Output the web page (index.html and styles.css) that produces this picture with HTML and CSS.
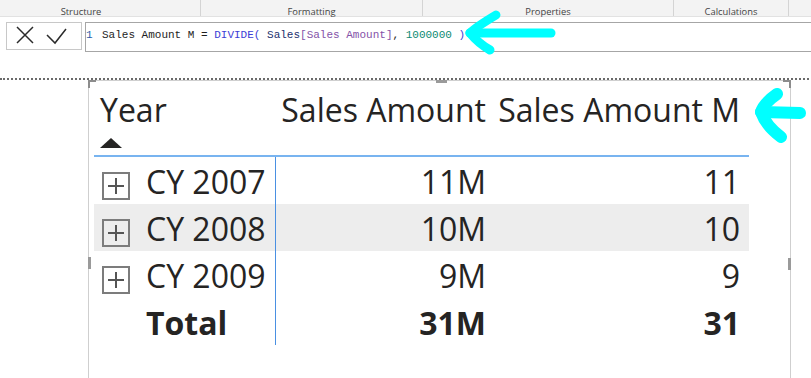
FILE: index.html
```html
<!DOCTYPE html>
<html>
<head>
<meta charset="utf-8">
<link rel="stylesheet" href="styles.css">
</head>
<body>
<div class="ribbon">
  <div class="group g1">Structure</div>
  <div class="group g2">Formatting</div>
  <div class="group g3">Properties</div>
  <div class="group g4">Calculations</div>
  <div class="group g5"></div>
</div>
<div class="fbar">
  <div class="fx">
    <svg class="fx-icons" width="76" height="28" viewBox="0 0 76 28">
      <path d="M11 5 L27 21 M27 5 L11 21" stroke="#2b2b2b" stroke-width="1.5" fill="none"/>
      <path d="M41 13 L49 21 L60 7" stroke="#2b2b2b" stroke-width="1.5" fill="none"/>
    </svg>
  </div>
  <div class="formula"><span class="ln">1</span><span class="tx">Sales Amount M = </span><span class="fn">DIVIDE(</span><span class="tx"> </span><span class="tb">Sales</span><span class="col">[Sales Amount]</span><span class="tx">, </span><span class="num">1000000</span><span class="tx"> </span><span class="fn">)</span></div>
</div>
<div class="dots"></div>
<div class="visual">
  <span class="corner tl"></span>
  <span class="corner tr"></span>
  <span class="handle top"></span>
  <span class="handle left"></span>
  <span class="handle right"></span>
  <div class="tbl">
    <div class="thead">
      <div class="cell c1 hcell">Year<div class="sort"></div></div>
      <div class="cell c2 hcell">Sales Amount</div>
      <div class="cell c3 hcell">Sales Amount M</div>
    </div>
    <div class="row">
      <div class="cell c1 body"><span class="exp"></span>CY 2007</div>
      <div class="cell c2">11M</div>
      <div class="cell c3">11</div>
    </div>
    <div class="row alt">
      <div class="cell c1 body"><span class="exp"></span>CY 2008</div>
      <div class="cell c2">10M</div>
      <div class="cell c3">10</div>
    </div>
    <div class="row">
      <div class="cell c1 body"><span class="exp"></span>CY 2009</div>
      <div class="cell c2">9M</div>
      <div class="cell c3">9</div>
    </div>
    <div class="row total">
      <div class="cell c1 body">Total</div>
      <div class="cell c2">31M</div>
      <div class="cell c3">31</div>
    </div>
  </div>
</div>
<svg class="arrows" width="811" height="378" viewBox="0 0 811 378">
  <g stroke="#00ffff" fill="none" stroke-linecap="round" stroke-linejoin="round">
    <path d="M496 15 Q476 27 470 33 Q478 43 490 50" stroke-width="9"/>
    <path d="M470 33 L551 33" stroke-width="9"/>
    <path d="M777 94 Q764 103 761 112 Q766 126 781 137" stroke-width="12"/>
    <path d="M761 112 L800 113" stroke-width="12"/>
  </g>
</svg>
</body>
</html>
```
FILE: styles.css
```css
* { box-sizing: border-box; margin: 0; padding: 0; }
html, body { width: 811px; height: 378px; overflow: hidden; background: #fff; }
body { position: relative; font-family: "Open Sans", "Noto Sans", sans-serif; color: #252423; }

.ribbon { display: flex; height: 17px; margin-left: -38px; width: 849px; background: #f3f3f3; border-bottom: 1px solid #e2e2e2; }
.group { display: flex; align-items: flex-end; justify-content: center; border-right: 1px solid #d4d4d4; font-size: 9.4px; line-height: 9px; color: #444; }
.g1 { width: 239px; }
.g2 { width: 222px; }
.g3 { width: 251px; }
.g4 { width: 115px; }
.g5 { flex: 1; border-right: none; }

.fbar { display: flex; margin-top: 5px; height: 30px; }
.fx { width: 76px; height: 28px; margin-left: 6px; border: 1px solid #c8c8c8; background: #fff; }
.fx-icons { display: block; margin: -1px; }
.formula { flex: 1; margin-left: 3px; margin-right: -20px; height: 30px; border: 1px solid #a6a6a6; padding-top: 5px; font: 11px/14px "Liberation Mono", monospace; white-space: pre; color: #1e1e1e; }
.ln { display: inline-block; width: 16px; color: #2a5ca8; }
.fn { color: #3d3dd6; }
.tb { color: #1c2f6e; }
.col { color: #8452a8; }
.num { color: #0b8a72; }

.dots { height: 2px; margin-top: 26px; background: repeating-linear-gradient(90deg, #6a6a6a 0 2px, transparent 2px 4px); background-position: 3px 0; }

.visual { position: relative; margin-left: 88px; width: 703px; height: 300px; border: 1px solid #cfcfcf; border-bottom: none; }
.corner { position: absolute; top: -1px; width: 8px; height: 8px; border-top: 2px solid #8c8c8c; }
.corner.tl { left: -1px; border-left: 2px solid #8c8c8c; }
.corner.tr { right: -1px; border-right: 2px solid #8c8c8c; }
.handle { position: absolute; background: #9a9a9a; }
.handle.top { top: -1px; left: 347px; width: 11px; height: 3px; }
.handle.left { left: -1px; top: 176px; width: 3px; height: 12px; }
.handle.right { right: -1px; top: 177px; width: 3px; height: 12px; }

.tbl { margin-left: 5px; width: 655px; }
.thead { display: flex; height: 76px; border-bottom: 2px solid #78b4f0; }
.row { display: flex; height: 47px; }
.row.alt { background: #ededed; }
.cell { font-size: 32px; line-height: 44px; padding-top: 3px; white-space: nowrap; }
.hcell { line-height: 40px; padding-top: 9px; }
.c1 { width: 182px; padding-left: 6px; }
.c2 { width: 217px; text-align: right; padding-right: 7px; }
.c3 { width: 256px; text-align: right; padding-right: 9px; }
.c1.body { display: flex; align-items: flex-start; padding-left: 0; border-right: 1px solid #4a90e2; }
.total .cell { font-weight: 700; }
.total .c1.body { padding-left: 52px; }

.sort { width: 0; height: 0; margin-top: 8px; border-left: 11.5px solid transparent; border-right: 11.5px solid transparent; border-bottom: 10px solid #252423; }

.exp { position: relative; flex: none; width: 28px; height: 28px; margin: 12px 16px 0 8px; border: 2px solid #7c7c7c; }
.exp::before, .exp::after { content: ""; position: absolute; background: #555; }
.exp::before { left: 4px; top: 11px; width: 16px; height: 2px; }
.exp::after { left: 11px; top: 4px; width: 2px; height: 16px; }

.arrows { position: absolute; left: 0; top: 0; pointer-events: none; }
```
